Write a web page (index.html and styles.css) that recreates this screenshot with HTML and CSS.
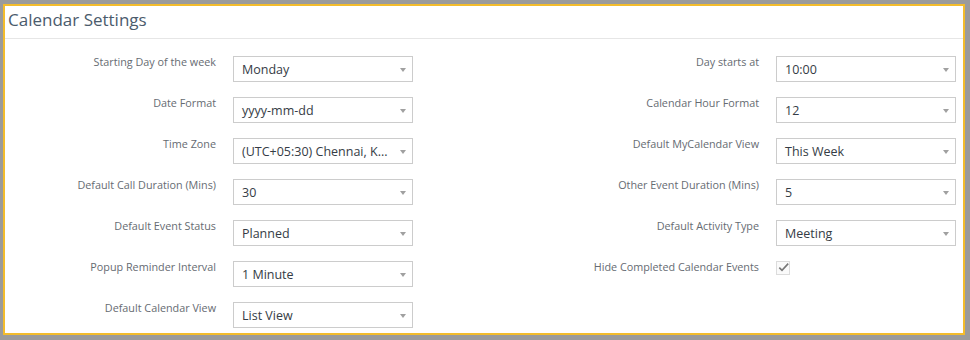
FILE: index.html
```html
<!DOCTYPE html>
<html lang="en">
<head>
  <meta charset="UTF-8">
  <title>Calendar Settings</title>
  <link rel="stylesheet" href="styles.css">
</head>
<body>

  <div class="panel">
    <div class="panel-head">Calendar Settings</div>

    <div class="settings">
      <label class="field-label">Starting Day of the week</label>
      <div class="select"><span>Monday</span><i class="caret"></i></div>
      <label class="field-label">Day starts at</label>
      <div class="select"><span>10:00</span><i class="caret"></i></div>

      <label class="field-label">Date Format</label>
      <div class="select"><span>yyyy-mm-dd</span><i class="caret"></i></div>
      <label class="field-label">Calendar Hour Format</label>
      <div class="select"><span>12</span><i class="caret"></i></div>

      <label class="field-label">Time Zone</label>
      <div class="select"><span>(UTC+05:30) Chennai, K...</span><i class="caret"></i></div>
      <label class="field-label">Default MyCalendar View</label>
      <div class="select"><span>This Week</span><i class="caret"></i></div>

      <label class="field-label">Default Call Duration (Mins)</label>
      <div class="select"><span>30</span><i class="caret"></i></div>
      <label class="field-label">Other Event Duration (Mins)</label>
      <div class="select"><span>5</span><i class="caret"></i></div>

      <label class="field-label">Default Event Status</label>
      <div class="select"><span>Planned</span><i class="caret"></i></div>
      <label class="field-label">Default Activity Type</label>
      <div class="select"><span>Meeting</span><i class="caret"></i></div>

      <label class="field-label">Popup Reminder Interval</label>
      <div class="select"><span>1 Minute</span><i class="caret"></i></div>
      <label class="field-label">Hide Completed Calendar Events</label>
      <div class="check">
        <svg width="13" height="13" viewBox="0 0 13 13"><path d="M2.3 6.6 L5 9.3 L11.2 2.6" fill="none" stroke="#777" stroke-width="1.6"/></svg>
      </div>

      <label class="field-label">Default Calendar View</label>
      <div class="select"><span>List View</span><i class="caret"></i></div>
    </div>
  </div>

</body>
</html>
```

FILE: styles.css
```css
body {
  margin: 0;
  height: 340px;
  background: #9b9b9b;
  font-family: "Open Sans", Arial, sans-serif;
  overflow: hidden;
}

.panel {
  margin: 4px 5px 0 3px;
  height: 327px;
  background-color: #fff;
  border: 2px solid #f3bc2c;
}

.panel-head {
  height: 32px;
  padding: 0 3px;
  border-bottom: 1px solid #e6e6e6;
  font-size: 17px;
  line-height: 28px;
  color: #4b5b6c;
}

.settings {
  display: grid;
  grid-template-columns: 210px 180px 329px 180px;
  grid-auto-rows: 26px;
  column-gap: 17px;
  row-gap: 15px;
  padding: 17px 0 0 1px;
}

.field-label {
  margin-top: -1px;
  text-align: right;
  font-size: 10.8px;
  line-height: 14px;
  color: #666b72;
}

.select {
  display: flex;
  align-items: center;
  justify-content: space-between;
  box-sizing: border-box;
  height: 26px;
  padding: 0 6px 0 8px;
  border: 1px solid #cccccc;
  font-size: 12.5px;
  color: #353c45;
}

.caret {
  width: 0;
  height: 0;
  border-left: 3px solid transparent;
  border-right: 3px solid transparent;
  border-top: 4px solid #a0a0a0;
  margin-top: 2px;
}

.check {
  box-sizing: border-box;
  width: 14px;
  height: 14px;
  border: 1px solid #dcdcdc;
  background: #fafafa;
}

.check svg {
  display: block;
  margin: -1px 0 0 0;
}
```
